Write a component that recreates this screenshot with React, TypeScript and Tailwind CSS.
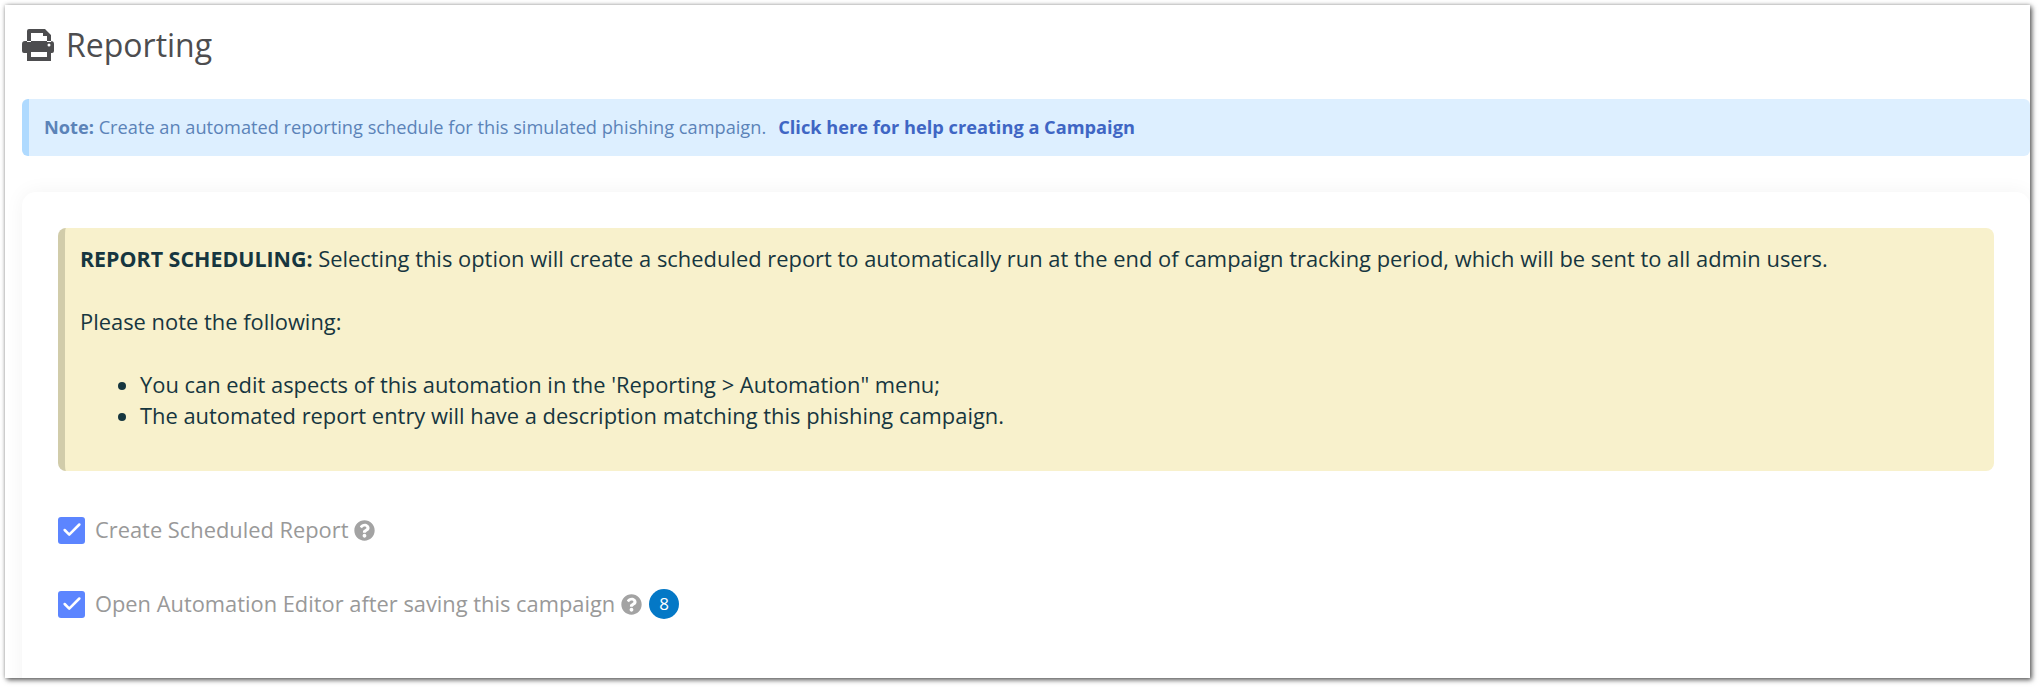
import { FaQuestionCircle } from "react-icons/fa";
import { Check } from "lucide-react";

const CheckRow = ({ label, badge }: { label: string; badge?: string }) => {
  return (
    <div className="flex items-center h-[30px]">
      <span className="flex items-center justify-center w-[27px] h-[27px] rounded-[3px] bg-[#5c85ff] text-white shrink-0">
        <Check size={22} strokeWidth={2.8} />
      </span>
      <span className="ml-[10px] text-[21.85px] text-[#999999]">{label}</span>
      <FaQuestionCircle className="ml-[6px] text-[#a3a3a3] text-[21px]" />
      {badge && (
        <span className="ml-[7px] flex items-center justify-center w-[30px] h-[30px] rounded-full bg-[#0478c6] text-white text-[17px]">
          {badge}
        </span>
      )}
    </div>
  );
};

const App = () => {
  return (
    <div className="w-[2039px] h-[687px] bg-white pt-[5px] pl-[5px] font-['Open_Sans',sans-serif]">
      <div className="w-[2025px] h-[673px] bg-white shadow-[2px_2px_5px_rgba(0,0,0,0.6),0_0_4px_rgba(0,0,0,0.25)] pl-[17px] overflow-hidden">
        {/* heading */}
        <div className="flex items-center h-[94px] pb-[14px] text-[#4d4d4f]">
          <svg viewBox="0 0 32 32" className="w-[32px] h-[32px] fill-current">
            <path
              fillRule="evenodd"
              d="M7 0H23L29 6V13H25V7H21V4H9V13H5V2Q5 0 7 0ZM3 12H29Q32 12 32 15V22Q32 24 30 24H29V32H5V24H2Q0 24 0 22V15Q0 12 3 12ZM9 23V28H25V23ZM27 14.5A1.5 1.5 0 1 0 27 17.5A1.5 1.5 0 1 0 27 14.5Z"
            />
          </svg>
          <h1 className="ml-[12px] text-[32px]">Reporting</h1>
        </div>

        <div className="h-[57px] flex items-center pl-[15px] rounded-[6px] border-l-[7px] border-[#afdaff] bg-[#ddefff] text-[18.22px] text-[#5b83b8]">
          <span>
            <b className="font-bold">Note:</b> Create an automated reporting schedule for this simulated phishing campaign.
            <b className="ml-[12px] font-bold text-[#3f66c4]">Click here for help creating a Campaign</b>
          </span>
        </div>

        <div className="mt-[36px] rounded-tl-[14px] rounded-tr-[14px] bg-white shadow-[0_0_20px_rgba(0,0,0,0.05)] h-[600px] pt-[36px] pl-[36px] pr-[36px]">
          <div className="h-[243px] rounded-[8px] border-l-[7px] border-[#d1ccaa] bg-[#f8f1cc] pl-[15px] pt-[15px] text-[21.9px] leading-[31px] text-[#16363f]">
            <p>
              <b className="font-bold text-[21.4px]">REPORT SCHEDULING:</b> Selecting this option will create a scheduled report to automatically run at the end of campaign tracking period, which will be sent to all admin users.
            </p>
            <p className="mt-[32px]">Please note the following:</p>
            <ul className="mt-[32px] list-disc pl-[60px]">
              <li>You can edit aspects of this automation in the 'Reporting &gt; Automation" menu;</li>
              <li>The automated report entry will have a description matching this phishing campaign.</li>
            </ul>
          </div>

          <div className="mt-[44px] flex flex-col gap-[44px]">
            <CheckRow label="Create Scheduled Report" />
            <CheckRow label="Open Automation Editor after saving this campaign" badge="8" />
          </div>
        </div>
      </div>
    </div>
  );
};

export default App;
